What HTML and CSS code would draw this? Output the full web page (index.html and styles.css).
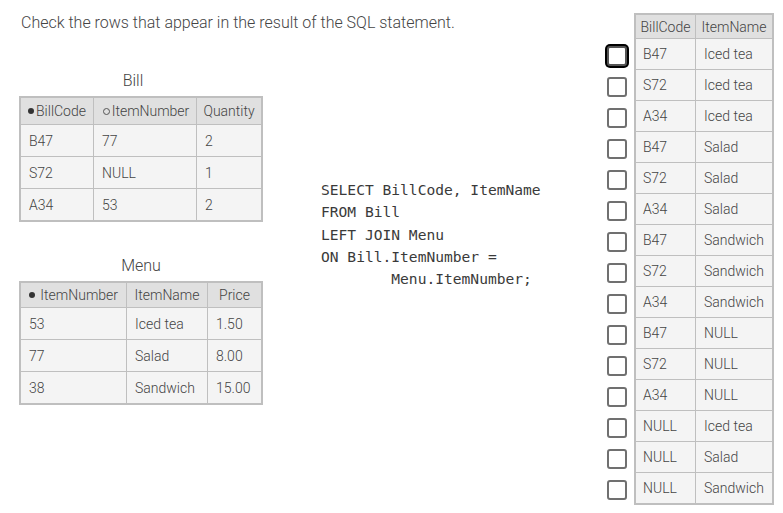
FILE: index.html
```
<!DOCTYPE html>
<html>
<head>
<meta charset="utf-8">
<link rel="stylesheet" href="styles.css">
</head>
<body>
<div class="page">
  <div class="main">
    <p class="prompt">Check the rows that appear in the result of the SQL statement.</p>
    <div class="content">
      <div class="tables">
        <div class="block bill">
          <div class="caption">Bill</div>
          <table class="data">
            <thead>
              <tr><th class="c1"><span class="dot"></span>BillCode</th><th class="c2"><span class="dot hollow"></span>ItemNumber</th><th class="c3">Quantity</th></tr>
            </thead>
            <tbody>
              <tr><td>B47</td><td>77</td><td>2</td></tr>
              <tr><td>S72</td><td>NULL</td><td>1</td></tr>
              <tr><td>A34</td><td>53</td><td>2</td></tr>
            </tbody>
          </table>
        </div>
        <div class="block menu">
          <div class="caption">Menu</div>
          <table class="data">
            <thead>
              <tr><th class="c1"><span class="dot"></span> ItemNumber</th><th class="c2">ItemName</th><th class="c3">Price</th></tr>
            </thead>
            <tbody>
              <tr><td>53</td><td>Iced tea</td><td>1.50</td></tr>
              <tr><td>77</td><td>Salad</td><td>8.00</td></tr>
              <tr><td>38</td><td>Sandwich</td><td>15.00</td></tr>
            </tbody>
          </table>
        </div>
      </div>
      <pre class="code">SELECT BillCode, ItemName
FROM Bill
LEFT JOIN Menu
ON Bill.ItemNumber =
        Menu.ItemNumber;</pre>
    </div>
  </div>
  <div class="answers">
    <div class="checks">
      <div class="cell"><input type="checkbox" class="cb focus"></div>
      <div class="cell"><input type="checkbox" class="cb"></div>
      <div class="cell"><input type="checkbox" class="cb"></div>
      <div class="cell"><input type="checkbox" class="cb"></div>
      <div class="cell"><input type="checkbox" class="cb"></div>
      <div class="cell"><input type="checkbox" class="cb"></div>
      <div class="cell"><input type="checkbox" class="cb"></div>
      <div class="cell"><input type="checkbox" class="cb"></div>
      <div class="cell"><input type="checkbox" class="cb"></div>
      <div class="cell"><input type="checkbox" class="cb"></div>
      <div class="cell"><input type="checkbox" class="cb"></div>
      <div class="cell"><input type="checkbox" class="cb"></div>
      <div class="cell"><input type="checkbox" class="cb"></div>
      <div class="cell"><input type="checkbox" class="cb"></div>
      <div class="cell"><input type="checkbox" class="cb"></div>
    </div>
    <table class="result">
      <thead>
        <tr><th class="r1">BillCode</th><th class="r2">ItemName</th></tr>
      </thead>
      <tbody>
        <tr><td>B47</td><td>Iced tea</td></tr>
        <tr><td>S72</td><td>Iced tea</td></tr>
        <tr><td>A34</td><td>Iced tea</td></tr>
        <tr><td>B47</td><td>Salad</td></tr>
        <tr><td>S72</td><td>Salad</td></tr>
        <tr><td>A34</td><td>Salad</td></tr>
        <tr><td>B47</td><td>Sandwich</td></tr>
        <tr><td>S72</td><td>Sandwich</td></tr>
        <tr><td>A34</td><td>Sandwich</td></tr>
        <tr><td>B47</td><td>NULL</td></tr>
        <tr><td>S72</td><td>NULL</td></tr>
        <tr><td>A34</td><td>NULL</td></tr>
        <tr><td>NULL</td><td>Iced tea</td></tr>
        <tr><td>NULL</td><td>Salad</td></tr>
        <tr><td>NULL</td><td>Sandwich</td></tr>
      </tbody>
    </table>
  </div>
</div>
</body>
</html>
```

FILE: styles.css
```
html, body {
  margin: 0;
  padding: 0;
  background: #fff;
}

body {
  font-family: Roboto, "Liberation Sans", sans-serif;
  font-weight: 300;
  color: #444;
}

.page {
  display: flex;
  align-items: flex-start;
}

.main {
  width: 605px;
}

.prompt {
  margin: 13px 0 0 21px;
  font-size: 16px;
  line-height: 19px;
}

.content {
  display: flex;
  align-items: flex-start;
  padding-left: 19px;
}

.tables {
  width: 244px;
}

.block.bill {
  margin-top: 39px;
}

.block.menu {
  margin-top: 34px;
}

.caption {
  font-size: 16px;
  line-height: 20px;
  text-align: center;
  margin-bottom: 5px;
}

.bill .caption {
  padding-right: 16px;
}

.data, .result {
  border-collapse: separate;
  border-spacing: 0;
  border: 2px solid #bfbfbf;
  font-size: 14px;
}

.data {
  width: 244px;
}

.data th, .data td,
.result th, .result td {
  padding: 0;
  border-right: 1px solid #bfbfbf;
  border-bottom: 1px solid #bfbfbf;
  white-space: nowrap;
}

.data th:last-child, .data td:last-child,
.result th:last-child, .result td:last-child {
  border-right: none;
}

.data tbody tr:last-child td,
.result tbody tr:last-child td {
  border-bottom: none;
}

.data th, .result th {
  background: #e0e0e0;
  font-weight: 300;
  text-align: center;
}

.data td, .result td {
  background: #f4f4f4;
  text-align: left;
}

.data th {
  height: 26px;
}

.menu .data th {
  height: 24px;
}

.data td {
  height: 31px;
  padding-left: 8px;
}

.bill .c1 { width: 72px; }
.bill .c2 { width: 102px; }
.bill .c3 { width: 64px; }

.menu .c1 { width: 105px; }
.menu .c2 { width: 80px; }
.menu .c3 { width: 53px; }

.dot {
  display: inline-block;
  width: 6px;
  height: 6px;
  border-radius: 50%;
  background: #333;
  vertical-align: middle;
  margin-right: 2px;
  position: relative;
  top: -1px;
}

.dot.hollow {
  background: transparent;
  border: 1px solid #555;
  width: 5px;
  height: 5px;
  margin-left: 2px;
}

.code {
  margin: 147px 0 0 58px;
  font-family: "DejaVu Sans Mono", "Liberation Mono", monospace;
  font-size: 14.6px;
  line-height: 22.3px;
  color: #3a3a3a;
}

.answers {
  display: flex;
  align-items: flex-start;
  margin-top: 13px;
}

.checks {
  width: 24px;
  margin-right: 5px;
  padding-top: 27px;
}

.checks .cell {
  height: 31px;
  display: flex;
  align-items: center;
  justify-content: center;
}

.cb {
  appearance: none;
  -webkit-appearance: none;
  margin: 0;
  width: 20px;
  height: 20px;
  box-sizing: border-box;
  border: 2px solid #707070;
  border-radius: 3px;
  background: #fff;
}

.cb.focus {
  box-shadow: 0 0 0 2px #000;
  border-color: #555;
}

.result {
  width: 140px;
}

.result th {
  height: 23px;
}

.result td {
  height: 30px;
}

.result .r1 { width: 59px; }
.result .r2 { width: 76px; }

.result td:first-child {
  padding-left: 7px;
}

.result td:last-child {
  padding-left: 8px;
}
```
